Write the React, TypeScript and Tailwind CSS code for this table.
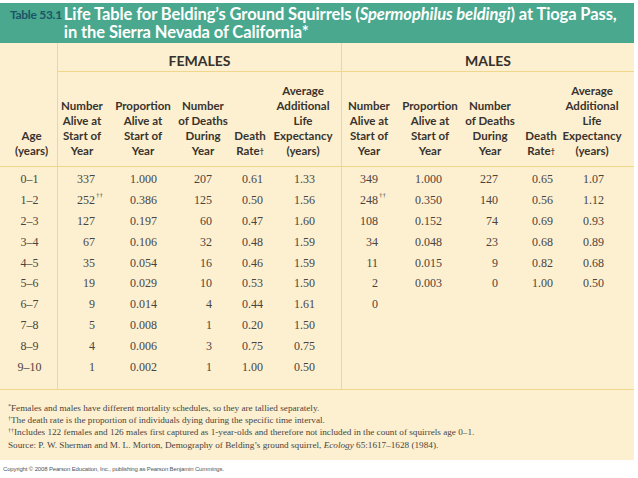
const females: string[][] = [
  ["337", "1.000", "207", "0.61", "1.33"],
  ["252††", "0.386", "125", "0.50", "1.56"],
  ["127", "0.197", "60", "0.47", "1.60"],
  ["67", "0.106", "32", "0.48", "1.59"],
  ["35", "0.054", "16", "0.46", "1.59"],
  ["19", "0.029", "10", "0.53", "1.50"],
  ["9", "0.014", "4", "0.44", "1.61"],
  ["5", "0.008", "1", "0.20", "1.50"],
  ["4", "0.006", "3", "0.75", "0.75"],
  ["1", "0.002", "1", "1.00", "0.50"],
];

const males: string[][] = [
  ["349", "1.000", "227", "0.65", "1.07"],
  ["248††", "0.350", "140", "0.56", "1.12"],
  ["108", "0.152", "74", "0.69", "0.93"],
  ["34", "0.048", "23", "0.68", "0.89"],
  ["11", "0.015", "9", "0.82", "0.68"],
  ["2", "0.003", "0", "1.00", "0.50"],
  ["0"],
];

const ages = ["0–1", "1–2", "2–3", "3–4", "4–5", "5–6", "6–7", "7–8", "8–9", "9–10"];

const headers: string[][] = [
  ["Number", "Alive at", "Start of", "Year"],
  ["Proportion", "Alive at", "Start of", "Year"],
  ["Number", "of Deaths", "During", "Year"],
  ["Death", "Rate†"],
  ["Average", "Additional", "Life", "Expectancy", "(years)"],
];

// last entry is the empty spacer column
const femalePad = ["pr-[11px]", "pr-[23px]", "pr-[14px]", "pr-[11px]", "pr-[17px]", ""];
const malePad = ["pr-[18px]", "pr-[22px]", "pr-[18px]", "pr-[13px]", "pr-[14px]", ""];

function Cell({ value }: { value: string }) {
  const marks = value.endsWith("††");
  const num = marks ? value.slice(0, -2) : value;
  return (
    <span className="relative">
      {num}
      {marks && (
        <span className="absolute left-full top-[1px] pl-[1px] text-[7px] leading-none">††</span>
      )}
    </span>
  );
}

function HeadLine({ text }: { text: string }) {
  if (text.endsWith("†")) {
    return (
      <span>
        {text.slice(0, -1)}
        <sup className="text-[7px] relative -top-[1px]">†</sup>
      </span>
    );
  }
  return <span>{text}</span>;
}

function Section({
  title,
  cols,
  pads,
  rows,
  className,
}: {
  title: string;
  cols: string;
  pads: string[];
  rows: string[][];
  className: string;
}) {
  return (
    <div className={`flex flex-col ${className}`}>
      <div className="h-[29px] border-b border-[#f1d78c] flex items-center justify-center pt-[7px] font-['Lato',sans-serif] font-bold text-[14px] text-[#36312c]">
        {title}
      </div>
      <div className={`h-[95px] border-b border-[#f1d78c] grid ${cols} pb-[8px]`}>
        {headers.map((h, i) => (
          <div
            key={i}
            className="flex flex-col justify-end items-center leading-[15px] text-[11.5px] font-bold font-['Lato',sans-serif] text-[#38332e] whitespace-nowrap"
          >
            {h.map((t) => (
              <HeadLine key={t} text={t} />
            ))}
          </div>
        ))}
      </div>
      <div className={`grid ${cols} auto-rows-[20.8px] pt-[2px] font-['Liberation_Serif',serif] text-[12px] text-[#4a443e]`}>
        {rows.map((r, ri) =>
          pads.map((p, ci) => (
            <div key={`${ri}-${ci}`} className={`flex items-center justify-end ${p}`}>
              {r[ci] && <Cell value={r[ci]} />}
            </div>
          ))
        )}
      </div>
    </div>
  );
}

export default function App() {
  return (
    <div className="w-[638px] h-[478px] bg-white pt-[3px] overflow-hidden">
      <div className="w-[634px]">
        {/* title bar */}
        <div className="h-[40px] bg-[#4aa88e] flex items-start pt-[2px] pl-[10px] gap-[2px] font-['Lato',sans-serif] font-bold">
          <span className="text-[12px] leading-[18px] pt-[1px] text-[#1b5566] tracking-[-0.3px]">
            Table 53.1
          </span>
          <div className="flex flex-col text-[16.5px] leading-[18px] text-white tracking-[-0.1px]">
            <span>
              Life Table for Belding’s Ground Squirrels (<i>Spermophilus beldingi</i>) at Tioga Pass,
            </span>
            <span>in the Sierra Nevada of California*</span>
          </div>
        </div>

        {/* table body */}
        <div className="bg-[#fdf0d0] h-[417px] flex flex-col">
          <div className="h-[347px] border-b border-[#f1d78c] flex">
            <div className="w-[58px] border-r border-[#f1d78c] flex flex-col">
              <div className="h-[124px] border-b border-[#f1d78c] flex flex-col justify-end items-center pl-[6px] pb-[8px] leading-[15px] text-[11.5px] font-bold font-['Lato',sans-serif] text-[#38332e]">
                <span>Age</span>
                <span>(years)</span>
              </div>
              <div className="grid auto-rows-[20.8px] pt-[2px] font-['Liberation_Serif',serif] text-[12px] text-[#4a443e]">
                {ages.map((a) => (
                  <div key={a} className="flex items-center justify-center pl-[2px]">
                    {a}
                  </div>
                ))}
              </div>
            </div>
            <Section
              title="FEMALES"
              cols="grid-cols-[48px_74px_46px_48px_58px_9px]"
              pads={femalePad}
              rows={females}
              className="w-[284px] border-r border-[#f1d78c]"
            />
            <Section
              title="MALES"
              cols="grid-cols-[54px_68px_52px_50px_52px_16px]"
              pads={malePad}
              rows={males}
              className="flex-1"
            />
          </div>

          {/* footnotes */}
          <div className="pt-[12px] pl-[8px] font-['Liberation_Serif',serif] text-[9.2px] leading-[12px] text-[#4a443e]">
            <p>
              <sup className="text-[6px]">*</sup>Females and males have different mortality schedules, so they are tallied separately.
            </p>
            <p>
              <sup className="text-[6px]">†</sup>The death rate is the proportion of individuals dying during the specific time interval.
            </p>
            <p>
              <sup className="text-[6px]">††</sup>Includes 122 females and 126 males first captured as 1-year-olds and therefore not included in the count of squirrels age 0–1.
            </p>
            <p className="mt-[1px]">
              Source: P. W. Sherman and M. L. Morton, Demography of Belding’s ground squirrel, <i>Ecology</i> 65:1617–1628 (1984).
            </p>
          </div>
        </div>

        <div className="h-[18px] flex items-center pl-[3px] font-['Liberation_Sans',sans-serif] text-[6px] text-[#555] tracking-[-0.15px]">
          Copyright © 2008 Pearson Education, Inc., publishing as Pearson Benjamin Cummings.
        </div>
      </div>
    </div>
  );
}
